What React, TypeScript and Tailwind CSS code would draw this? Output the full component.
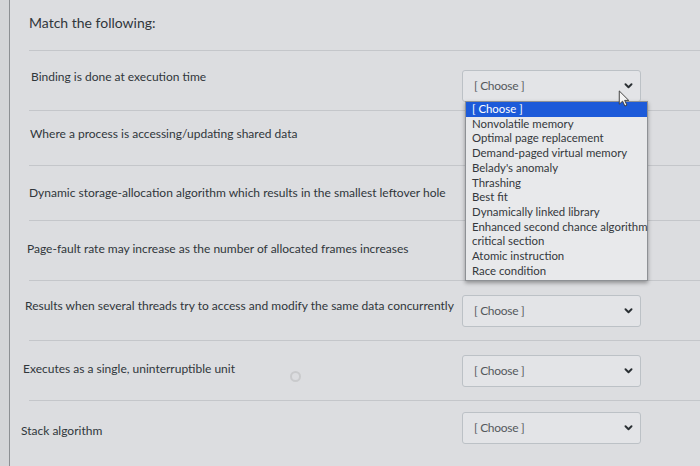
import React from 'react'

const rows = [
  { text: 'Binding is done at execution time', h: 'h-[60px]', t: '-mt-[8px] ml-[2px]', s: 'mt-[11px]', select: true },
  { text: 'Where a process is accessing/updating shared data', h: 'h-[55px]', t: '-mt-[9px] ml-[1px]' },
  { text: 'Dynamic storage-allocation algorithm which results in the smallest leftover hole', h: 'h-[55px]', t: '' },
  { text: 'Page-fault rate may increase as the number of allocated frames increases', h: 'h-[60px]', t: '-mt-[4px] -ml-[2px]' },
  { text: 'Results when several threads try to access and modify the same data concurrently', h: 'h-[60px]', t: '-mt-[10px] -ml-[4px]', s: '', select: true },
  { text: 'Executes as a single, uninterruptible unit', h: 'h-[60px]', t: '-mt-[4px] -ml-[6px]', s: '', select: true },
  { text: 'Stack algorithm', h: 'h-[66px]', t: '-mt-[6px] -ml-[8px]', s: '-mt-[11px]', select: true },
]

const options = [
  'Nonvolatile memory',
  'Optimal page replacement',
  'Demand-paged virtual memory',
  "Belady's anomaly",
  'Thrashing',
  'Best fit',
  'Dynamically linked library',
  'Enhanced second chance algorithm',
  'critical section',
  'Atomic instruction',
  'Race condition',
]

function Chevron() {
  return (
    <svg viewBox="0 0 10 7" className="h-[6px] w-[9px]" fill="none" stroke="#2a2f33" strokeWidth="2.2" strokeLinecap="round" strokeLinejoin="round">
      <path d="M1.5 1.5l3.5 3.5 3.5-3.5" />
    </svg>
  )
}

function Select() {
  return (
    <div className="flex h-[32px] w-[179px] items-center justify-between rounded-[3px] border border-[#bcc1c6] bg-[#e3e4e7] pl-[11px] pr-[7px]">
      <span className="text-[12px] tracking-[-0.3px] text-[#55595d]">[ Choose ]</span>
      <Chevron />
    </div>
  )
}

export default function App() {
  return (
    <div className="relative flex h-[466px] w-[700px] overflow-hidden bg-[#dcdde0] font-['Lato','Liberation_Sans',sans-serif] text-[#30363b]">
      {/* linker rand van het paneel */}
      <div className="w-[10px] shrink-0 border-r border-[#8c8f93] bg-[#d4d5d8]" />

      <div className="flex min-w-0 flex-1 flex-col pl-[19px]">
        <div className="h-[50px] pt-[12px] text-[14px]">Match the following:</div>

        {rows.map((r, i) => (
          <div key={i} className={`flex ${r.h} items-center border-t border-[#c4c6ca]`}>
            <div className={`flex-1 whitespace-nowrap text-[12px] ${r.t}`}>{r.text}</div>
            {r.select && (
              <div className={`mr-[59px] ${r.s}`}>
                <Select />
              </div>
            )}
          </div>
        ))}
      </div>

      {/* geopende keuzelijst */}
      <div className="absolute left-[465px] top-[101px] w-[183px] border border-[#8e9195] bg-[#e8e9eb] pb-[2px] text-[11.4px] leading-[14.7px] text-[#34383c] shadow-[0_2px_4px_rgba(0,0,0,0.35)]">
        <div className="bg-[#1c5ad9] px-[6px] text-white">[ Choose ]</div>
        {options.map(o => (
          <div key={o} className="whitespace-nowrap px-[6px]">{o}</div>
        ))}
      </div>

      {/* muiswijzer */}
      <svg viewBox="0 0 12 18" className="absolute left-[618px] top-[90px] h-[17px] w-[12px]">
        <path d="M1 1v14l3.5-3.2 2.4 5.2 2.2-1-2.4-5H11z" fill="#f4f4f4" stroke="#3a3a3a" strokeWidth="1" strokeLinejoin="round" />
      </svg>

      {/* laad-cursor */}
      <div className="absolute left-[290px] top-[371px] h-[11px] w-[11px] rounded-full border-2 border-[#c9cacc]" />
    </div>
  )
}
